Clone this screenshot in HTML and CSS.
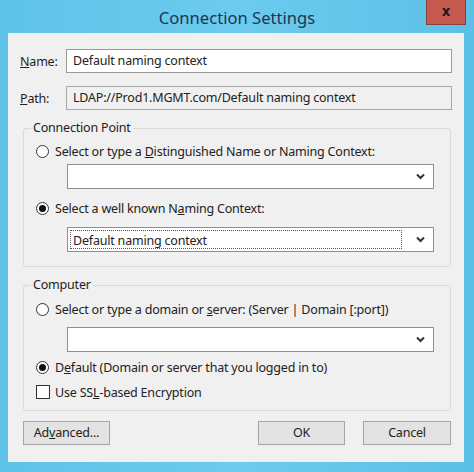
FILE: index.html
```html
<!DOCTYPE html>
<html>
<head>
<meta charset="utf-8">
<link rel="stylesheet" href="styles.css">
</head>
<body>
<div class="window">
  <div class="titlebar">
    <div class="title">Connection Settings</div>
    <div class="close">x</div>
  </div>
  <div class="client">
    <div class="row">
      <span class="lbl"><u>N</u>ame:</span>
      <div class="textbox">Default naming context</div>
    </div>
    <div class="row row-path">
      <span class="lbl"><u>P</u>ath:</span>
      <div class="textbox readonly">LDAP://Prod1.MGMT.com/Default naming context</div>
    </div>

    <fieldset class="group g1">
      <legend>Connection Point</legend>
      <div class="opt o1"><span class="radio"></span><span>Select or type a <u>D</u>istinguished Name or Naming Context:</span></div>
      <div class="combo c1"><span class="combo-text"></span><svg class="chev" width="9" height="7" viewBox="0 0 9 7"><polyline points="1,1.5 4.5,5 8,1.5" fill="none" stroke="#333" stroke-width="2"/></svg></div>
      <div class="opt o2"><span class="radio on"></span><span>Select a well known N<u>a</u>ming Context:</span></div>
      <div class="combo c2"><span class="combo-text focus">Default naming context</span><svg class="chev" width="9" height="7" viewBox="0 0 9 7"><polyline points="1,1.5 4.5,5 8,1.5" fill="none" stroke="#333" stroke-width="2"/></svg></div>
    </fieldset>

    <fieldset class="group g2">
      <legend>Computer</legend>
      <div class="opt o3"><span class="radio"></span><span>Select or type a domain or <u>s</u>erver: (Server | Domain [:port])</span></div>
      <div class="combo c3"><span class="combo-text"></span><svg class="chev" width="9" height="7" viewBox="0 0 9 7"><polyline points="1,1.5 4.5,5 8,1.5" fill="none" stroke="#333" stroke-width="2"/></svg></div>
      <div class="opt o4"><span class="radio on"></span><span>D<u>e</u>fault (Domain or server that you logged in to)</span></div>
      <div class="opt o5"><span class="check"></span><span>Use SS<u>L</u>-based Encryption</span></div>
    </fieldset>

    <div class="buttons">
      <div class="btn">Ad<u>v</u>anced...</div>
      <div class="spacer"></div>
      <div class="btn">OK</div>
      <div class="btn">Cancel</div>
    </div>
  </div>
</div>
</body>
</html>
```

FILE: styles.css
```css
* { box-sizing: border-box; }
html, body {
  margin: 0;
  padding: 0;
  width: 474px;
  height: 472px;
  overflow: hidden;
}
body {
  font-family: "Noto Sans", "Open Sans", sans-serif;
  font-size: 12.5px;
  letter-spacing: -0.2px;
  color: #222;
  background: #62c6ea;
}
.window {
  width: 474px;
  height: 472px;
  display: flex;
  flex-direction: column;
  background: linear-gradient(to right, #5fc3e8 0, #6ccbee 50%, #5cc0e6 100%);
}
.titlebar {
  height: 33px;
  display: grid;
  grid-template-columns: 1fr auto 1fr;
  align-items: start;
}
.title {
  grid-column: 2;
  font-size: 16.6px;
  letter-spacing: 0;
  line-height: 36px;
  color: #1b3556;
}
.close {
  grid-column: 3;
  justify-self: end;
  width: 40px;
  height: 25px;
  margin-right: 8px;
  background: #c75a4f;
  border: 1px solid #8c3f38;
  border-top: none;
  color: #1a1a1a;
  font-weight: bold;
  font-size: 14px;
  letter-spacing: 0;
  line-height: 22px;
  text-align: center;
}
.client {
  flex: 1;
  margin: 0 10px 10px 8px;
  background: #f0f0f0;
  padding-top: 16px;
  display: flex;
  flex-direction: column;
}
.row {
  display: flex;
  align-items: center;
  height: 24px;
  padding: 0 12px 0 12px;
}
.row-path { margin-top: 13px; }
.lbl {
  width: 46px;
  flex: none;
}
.textbox {
  flex: 1;
  height: 24px;
  border: 1px solid #9a9a9a;
  background: #fff;
  padding-left: 6px;
  line-height: 22px;
  white-space: nowrap;
  overflow: hidden;
}
.textbox.readonly {
  background: #f0f0f0;
  border-color: #a8a8a8;
}
.group {
  margin: 9px 13px 0 15px;
  padding: 0 0 14px 0;
  border: 1px solid #d9d9d9;
  border-radius: 3px;
  min-width: 0;
}
.group legend {
  margin-left: 7px;
  padding: 0 2px;
  line-height: 18px;
}
.g2 { padding-bottom: 9px; }
.opt {
  display: flex;
  align-items: center;
  height: 18px;
  padding-left: 12px;
  white-space: nowrap;
}
.o1 { margin-top: 5px; }
.o2 { margin-top: 10px; }
.o3 { margin-top: 6px; }
.o4 { margin-top: 6px; }
.o5 { margin-top: 7px; }
.radio {
  width: 13px;
  height: 13px;
  border: 1px solid #333;
  border-radius: 50%;
  background: #fff;
  margin-right: 6px;
  flex: none;
  display: flex;
  align-items: center;
  justify-content: center;
}
.radio.on::after {
  content: "";
  width: 7px;
  height: 7px;
  border-radius: 50%;
  background: #111;
}
.check {
  width: 14px;
  height: 14px;
  border: 1px solid #333;
  background: #fff;
  margin-right: 5px;
  flex: none;
}
.combo {
  height: 25px;
  margin: 0 16px 0 43px;
  border: 1px solid #8e8e8e;
  background: #fff;
  display: flex;
  align-items: center;
  padding: 2px 8px 2px 2px;
}
.c1 { margin-top: 4px; }
.c2 { margin-top: 10px; }
.c3 { margin-top: 9px; }
.combo-text {
  flex: 1;
  height: 100%;
  padding-left: 2px;
  line-height: 19px;
  margin-right: 14px;
}
.combo-text.focus {
  border: 1px dotted #555;
}
.chev { flex: none; }
.buttons {
  display: flex;
  margin: 10px 13px 0 15px;
  gap: 18px;
}
.spacer { flex: 1; }
.btn {
  width: 87px;
  height: 24px;
  border: 1px solid #a5a5a5;
  background: #e3e3e3;
  text-align: center;
  line-height: 22px;
}
.btn:last-child { width: 88px; }
```
